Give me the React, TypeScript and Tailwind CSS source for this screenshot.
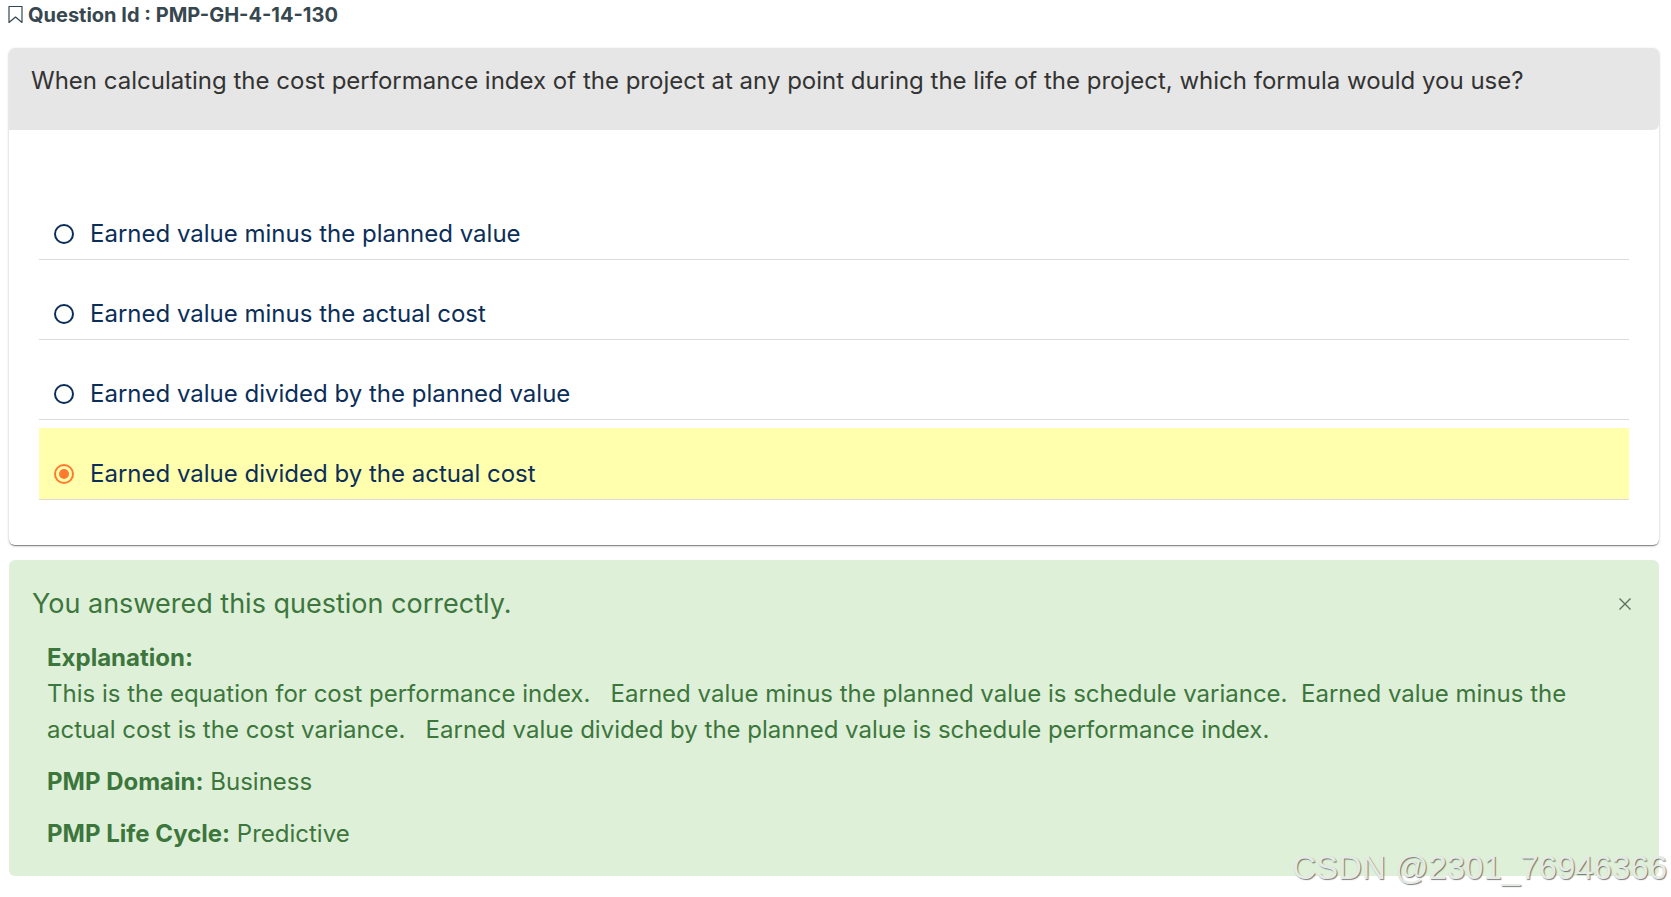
import { useState } from 'react';

const options = [
  'Earned value minus the planned value',
  'Earned value minus the actual cost',
  'Earned value divided by the planned value',
  'Earned value divided by the actual cost',
];

function BookmarkIcon() {
  return (
    <svg viewBox="0 0 16 18" className="h-[18px] w-4 shrink-0" fill="none" stroke="currentColor">
      <path d="M1 1.5h13v16l-6.5-5.5-6.5 5.5z" strokeWidth="1.2" strokeLinejoin="round" />
    </svg>
  );
}

function Option({ label, checked, onSelect }: { label: string; checked: boolean; onSelect: () => void }) {
  return (
    <label
      className={`flex cursor-pointer items-center gap-4 border-b border-[#dcdcdc] pt-7 pb-[7px] pl-[15px] text-[#0b2e59] ${
        checked ? 'bg-[#ffffae]' : ''
      }`}
    >
      <input
        type="radio"
        name="answer"
        checked={checked}
        onChange={onSelect}
        className="size-5 shrink-0 appearance-none rounded-full border-2 border-[#0b2e59] bg-clip-content p-[3px] checked:border-[#ff7a2f] checked:bg-[#ff7a2f]"
      />
      <span className="text-2xl leading-9">{label}</span>
    </label>
  );
}

export default function App() {
  const [selected, setSelected] = useState(3);
  const [showResult, setShowResult] = useState(true);

  return (
    <main className="relative bg-white pr-3 pb-5 pl-2 font-['Inter','Noto_Sans',sans-serif] font-normal">
      <div className="flex h-12 items-start gap-1 pt-[5px] text-[#37474f]">
        <BookmarkIcon />
        <h1 className="text-xl leading-5 font-bold">Question Id : PMP-GH-4-14-130</h1>
      </div>

      <section className="ml-px rounded-md bg-white pb-[45px] shadow-[0_2px_1px_-1px_rgba(0,0,0,0.25),0_1px_1px_rgba(0,0,0,0.2),0_1px_3px_rgba(0,0,0,0.2)]">
        <div className="rounded-t-md rounded-br-md bg-[#e6e6e6] px-[22px] pt-[15px] pb-[31px]">
          <p className="text-2xl leading-9 text-[#333333]">
            When calculating the cost performance index of the project at any point during the life of the project,
            which formula would you use?
          </p>
        </div>
        <fieldset aria-label="Answers" className="flex flex-col gap-2 px-[30px] pt-[58px]">
          {options.map((label, i) => (
            <Option key={label} label={label} checked={selected === i} onSelect={() => setSelected(i)} />
          ))}
        </fieldset>
      </section>

      {showResult && (
        <section className="mt-[15px] ml-px rounded-md bg-[#def0d8] pt-6 pr-6 pb-6 pl-[23px] text-[#3c763d]">
          <div className="flex items-center justify-between">
            <h2 className="text-[27px] leading-10">You answered this question correctly.</h2>
            <button
              type="button"
              aria-label="Close"
              onClick={() => setShowResult(false)}
              className="flex size-5 cursor-pointer items-center justify-center text-[#5f6f5c]"
            >
              <svg viewBox="0 0 12 12" className="size-3" fill="none" stroke="currentColor" strokeWidth="1.4">
                <path d="M0.5 0.5l11 11M11.5 0.5l-11 11" />
              </svg>
            </button>
          </div>
          <div className="mt-4 flex flex-col gap-4 pr-[60px] pl-[15px] text-2xl leading-9">
            <p>
              <strong className="font-bold">Explanation:</strong>
              <br />
              This is the equation for cost performance index.&nbsp;&nbsp; Earned value minus the planned value is
              schedule variance.&nbsp; Earned value minus the actual cost is the cost variance.&nbsp;&nbsp; Earned value
              divided by the planned value is schedule performance index.
            </p>
            <p>
              <strong className="font-bold">PMP Domain:</strong> Business
            </p>
            <p>
              <strong className="font-bold">PMP Life Cycle:</strong> Predictive
            </p>
          </div>
        </section>
      )}

      <div className="pointer-events-none absolute right-1 bottom-2 font-['Liberation_Sans',Arial,sans-serif] text-[33px] leading-10 font-normal text-[#e6eae5] [text-shadow:1px_1px_1px_rgba(0,0,0,0.5)]">
        CSDN @2301_76946366
      </div>
    </main>
  );
}
